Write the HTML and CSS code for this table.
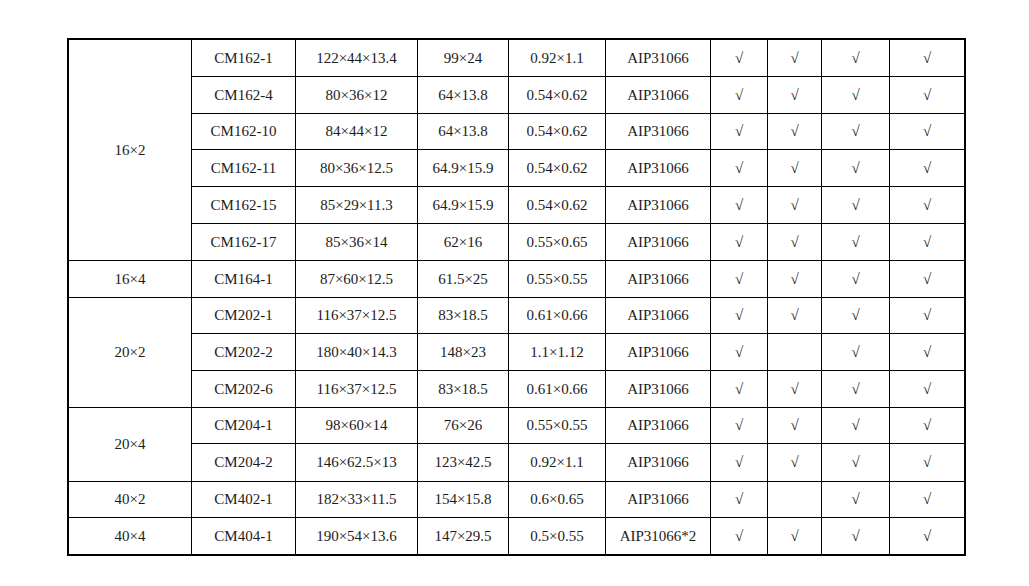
FILE: index.html
```html
<!DOCTYPE html>
<html>
<head>
<meta charset="utf-8">
<link rel="stylesheet" href="styles.css">
</head>
<body>
<table class="spec">
  <colgroup>
    <col class="c1"><col class="c2"><col class="c3"><col class="c4"><col class="c5">
    <col class="c6"><col class="c7"><col class="c8"><col class="c9"><col class="c10">
  </colgroup>
  <tbody>
    <tr class="h37"><td rowspan="6">16×2</td><td>CM162-1</td><td>122×44×13.4</td><td>99×24</td><td>0.92×1.1</td><td>AIP31066</td><td>√</td><td>√</td><td>√</td><td class="last">√</td></tr>
    <tr class="h37"><td>CM162-4</td><td>80×36×12</td><td>64×13.8</td><td>0.54×0.62</td><td>AIP31066</td><td>√</td><td>√</td><td>√</td><td class="last">√</td></tr>
    <tr class="h36"><td>CM162-10</td><td>84×44×12</td><td>64×13.8</td><td>0.54×0.62</td><td>AIP31066</td><td>√</td><td>√</td><td>√</td><td class="last">√</td></tr>
    <tr class="h37"><td>CM162-11</td><td>80×36×12.5</td><td>64.9×15.9</td><td>0.54×0.62</td><td>AIP31066</td><td>√</td><td>√</td><td>√</td><td class="last">√</td></tr>
    <tr class="h37"><td>CM162-15</td><td>85×29×11.3</td><td>64.9×15.9</td><td>0.54×0.62</td><td>AIP31066</td><td>√</td><td>√</td><td>√</td><td class="last">√</td></tr>
    <tr class="h37"><td>CM162-17</td><td>85×36×14</td><td>62×16</td><td>0.55×0.65</td><td>AIP31066</td><td>√</td><td>√</td><td>√</td><td class="last">√</td></tr>
    <tr class="h37"><td>16×4</td><td>CM164-1</td><td>87×60×12.5</td><td>61.5×25</td><td>0.55×0.55</td><td>AIP31066</td><td>√</td><td>√</td><td>√</td><td class="last">√</td></tr>
    <tr class="h36"><td rowspan="3">20×2</td><td>CM202-1</td><td>116×37×12.5</td><td>83×18.5</td><td>0.61×0.66</td><td>AIP31066</td><td>√</td><td>√</td><td>√</td><td class="last">√</td></tr>
    <tr class="h37"><td>CM202-2</td><td>180×40×14.3</td><td>148×23</td><td>1.1×1.12</td><td>AIP31066</td><td>√</td><td></td><td>√</td><td class="last">√</td></tr>
    <tr class="h37"><td>CM202-6</td><td>116×37×12.5</td><td>83×18.5</td><td>0.61×0.66</td><td>AIP31066</td><td>√</td><td>√</td><td>√</td><td class="last">√</td></tr>
    <tr class="h36"><td rowspan="2">20×4</td><td>CM204-1</td><td>98×60×14</td><td>76×26</td><td>0.55×0.55</td><td>AIP31066</td><td>√</td><td>√</td><td>√</td><td class="last">√</td></tr>
    <tr class="h38"><td>CM204-2</td><td>146×62.5×13</td><td>123×42.5</td><td>0.92×1.1</td><td>AIP31066</td><td>√</td><td>√</td><td>√</td><td class="last">√</td></tr>
    <tr class="h36"><td>40×2</td><td>CM402-1</td><td>182×33×11.5</td><td>154×15.8</td><td>0.6×0.65</td><td>AIP31066</td><td>√</td><td></td><td>√</td><td class="last">√</td></tr>
    <tr class="h36 end"><td>40×4</td><td>CM404-1</td><td>190×54×13.6</td><td>147×29.5</td><td>0.5×0.55</td><td>AIP31066*2</td><td>√</td><td>√</td><td>√</td><td class="last">√</td></tr>
  </tbody>
</table>
</body>
</html>
```

FILE: styles.css
```css
html, body {
  margin: 0;
  padding: 0;
  background: #ffffff;
}

body {
  padding: 38px 0 0 67px;
  font-family: "Liberation Serif", "Times New Roman", serif;
  font-size: 15px;
  color: #1c1c1c;
}

.spec {
  border-collapse: separate;
  border-spacing: 0;
  border: 2px solid #000;
  table-layout: fixed;
  width: 899px;
}

.spec td {
  box-sizing: border-box;
  padding: 0;
  text-align: center;
  vertical-align: middle;
  border-right: 1px solid #000;
  border-bottom: 1px solid #000;
  white-space: nowrap;
}

.spec td.last {
  border-right: none;
}

.spec tr.end td {
  border-bottom: none;
}

.spec td[rowspan] {
  border-bottom: 1px solid #000;
}

.c1 { width: 123px; }
.c2 { width: 104px; }
.c3 { width: 122px; }
.c4 { width: 91px; }
.c5 { width: 97px; }
.c6 { width: 105px; }
.c7 { width: 57px; }
.c8 { width: 54px; }
.c9 { width: 68px; }
.c10 { width: 74px; }

.h36 { height: 36px; }
.h37 { height: 37px; }
.h38 { height: 38px; }
.spec tr.end { height: 36px; }
```
